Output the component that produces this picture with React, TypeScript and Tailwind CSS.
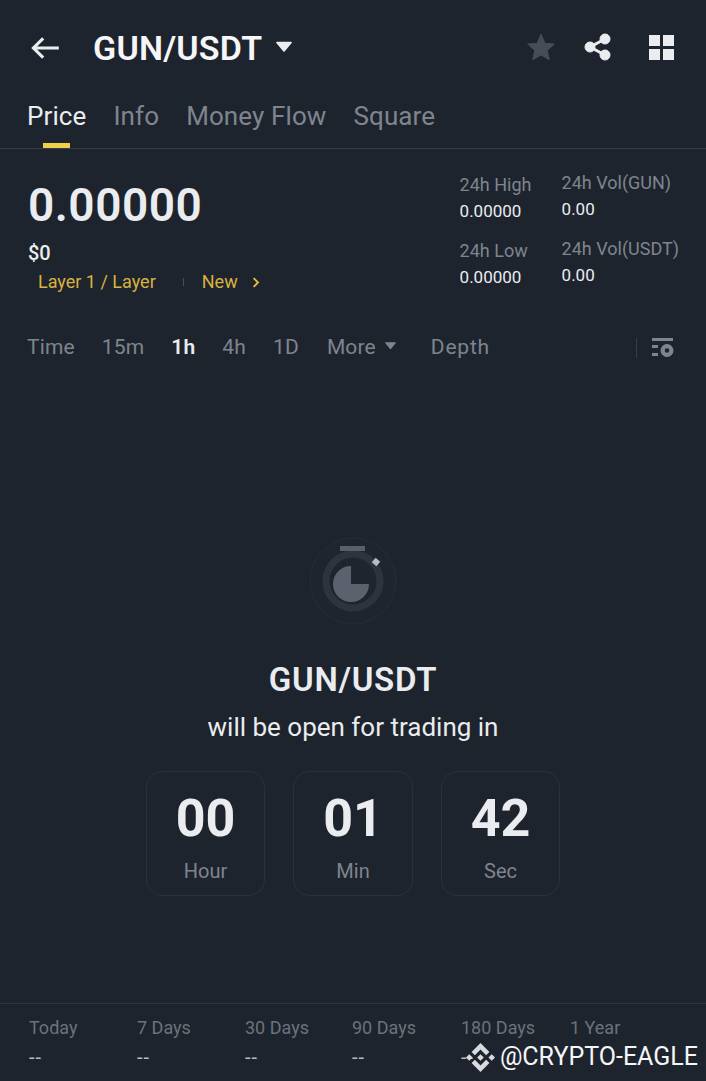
import React from 'react'

const tabs = ['Price', 'Info', 'Money Flow', 'Square']
const intervals = ['Time', '15m', '1h', '4h', '1D']
const countdown = [
  { value: '00', label: 'Hour' },
  { value: '01', label: 'Min' },
  { value: '42', label: 'Sec' },
]
const periods = ['Today', '7 Days', '30 Days', '90 Days', '180 Days', '1 Year']

function Stat({ label, value }: { label: string; value: string }) {
  return (
    <div className="flex flex-col">
      <span className="text-[18px] leading-[24px] text-[#7e858f]">{label}</span>
      <span className="mt-[2px] text-[17px] leading-[24px] text-[#eaecef]">{value}</span>
    </div>
  )
}

function Caret({ className }: { className: string }) {
  return (
    <svg viewBox="0 0 16 12" className={className} fill="currentColor">
      <path d="M1.5 1.5h13a.8.8 0 0 1 .6 1.3L8.6 10.6a.8.8 0 0 1-1.2 0L.9 2.8a.8.8 0 0 1 .6-1.3z" />
    </svg>
  )
}

function BinanceMark() {
  return (
    <svg viewBox="0 0 126.61 126.61" className="h-[29px] w-[29px] text-[#d9dbde]" fill="currentColor">
      <path d="M38.73 53.2l24.59-24.58 24.6 24.6 14.3-14.31L63.32 0 24.43 38.9z" />
      <path d="M0 63.31l14.3-14.31 14.31 14.31-14.31 14.3z" />
      <path d="M38.73 73.41l24.59 24.59 24.6-24.6 14.31 14.29-38.9 38.92-38.91-38.88z" />
      <path d="M98 63.31l14.3-14.31 14.31 14.31-14.31 14.3z" />
      <path d="M77.83 63.3L63.32 48.78 48.81 63.28l14.51 14.5z" />
    </svg>
  )
}

export default function App() {
  return (
    <div
      className="relative flex h-[1081px] w-[706px] flex-col overflow-hidden bg-[#1e242e] text-[#eaecef]"
      style={{ fontFamily: 'Roboto, "Noto Sans", sans-serif' }}
    >
      {/* 頂部標題列 */}
      <div className="flex h-[96px] items-center pl-[30px] pr-[32px]">
        <svg viewBox="0 0 32 26" className="h-[24px] w-[30px]" fill="none" stroke="#eaecef" strokeWidth="3.4">
          <path d="M31 13H4M14 2.5L3.5 13 14 23.5" />
        </svg>
        <span className="ml-[33px] text-[34px] font-semibold leading-none tracking-[0.2px] text-[#f5f6f7]">GUN/USDT</span>
        <Caret className="ml-[13px] h-[13px] w-[18px] -translate-y-[2px] text-[#eaecef]" />
        <div className="ml-auto flex -translate-y-px items-center">
          <svg
            viewBox="0 0 24 24"
            className="h-[30px] w-[30px] text-[#474d57]"
            fill="currentColor"
            stroke="currentColor"
            strokeWidth="1"
            strokeLinejoin="round"
          >
            <path d="M12 2l3 7 7.4.7-5.6 4.9 1.7 7.4-6.5-3.9-6.5 3.9 1.7-7.4-5.6-4.9L9 9z" />
          </svg>
          <svg viewBox="0 0 28 28" className="ml-[28px] h-[28px] w-[28px]" fill="#eaecef" stroke="#eaecef">
            <circle cx="21" cy="6" r="5" />
            <circle cx="6" cy="14" r="5" />
            <circle cx="21" cy="22" r="5" />
            <path d="M21 6L6 14l15 8" fill="none" strokeWidth="3" />
          </svg>
          <div className="ml-[37px] grid grid-cols-2 gap-[3px]">
            <div className="h-[11px] w-[11px] bg-[#eaecef]" />
            <div className="h-[11px] w-[11px] bg-[#eaecef]" />
            <div className="h-[11px] w-[11px] bg-[#eaecef]" />
            <div className="h-[11px] w-[11px] bg-[#eaecef]" />
          </div>
        </div>
      </div>

      {/* 分頁 */}
      <div className="flex h-[53px] gap-[27px] border-b border-[#383e48] pl-[27px]">
        {tabs.map((tab, i) => (
          <div key={tab} className="relative pt-[4px]">
            <span className={`text-[26px] leading-[32px] tracking-[0.1px] ${i === 0 ? 'text-[#eaecef]' : 'text-[#7e858f]'}`}>
              {tab}
            </span>
            {i === 0 && <div className="absolute bottom-0 left-[16px] h-[5px] w-[27px] bg-[#f0cf4a]" />}
          </div>
        ))}
      </div>

      {/* 價格與 24h 資料 */}
      <div className="flex h-[171px] pl-[28px]">
        <div className="flex flex-col pt-[26px]">
          <span className="text-[46px] font-semibold leading-[60px] tracking-[0.5px] text-[#eaecef]">0.00000</span>
          <span className="mt-[5px] text-[20px] font-medium leading-[26px]">$0</span>
          <div className="mt-[4px] flex items-center pl-[10px] text-[18px] leading-[24px] text-[#d8b23f]">
            <span>Layer 1 / Layer</span>
            <div className="ml-[27px] h-[8px] w-px bg-[#474d57]" />
            <span className="ml-[18px]">New</span>
            <svg viewBox="0 0 10 14" className="ml-[14px] h-[11px] w-[8px]" fill="none" stroke="#e8bd3f" strokeWidth="2.4">
              <path d="M2 1.5L7.5 7 2 12.5" />
            </svg>
          </div>
        </div>
        <div className="ml-auto flex pr-[27px] pt-[23px]">
          <div className="flex w-[102px] flex-col gap-[16px] pt-px">
            <Stat label="24h High" value="0.00000" />
            <Stat label="24h Low" value="0.00000" />
          </div>
          <div className="-mt-px flex flex-col gap-[16px]">
            <Stat label="24h Vol(GUN)" value="0.00" />
            <Stat label="24h Vol(USDT)" value="0.00" />
          </div>
        </div>
      </div>

      {/* K 線週期列 */}
      <div className="flex h-[54px] items-center pl-[27px] pr-[31px] pt-[2px] text-[21px] tracking-[0.15px] text-[#7e858f]">
        <div className="flex gap-[27px]">
          {intervals.map((item) => (
            <span key={item} className={item === '1h' ? 'font-semibold text-[#eaecef]' : ''}>
              {item}
            </span>
          ))}
        </div>
        <span className="ml-[28px]">More</span>
        <Caret className="ml-[8px] h-[9px] w-[13px] -translate-y-[3px] text-[#7e858f]" />
        <span className="ml-[34px] tracking-[0.8px]">Depth</span>
        <div className="ml-auto h-[20px] w-px bg-[#383e48]" />
        <svg viewBox="0 0 24 24" className="ml-[14px] h-[24px] w-[24px] text-[#7e858f]" fill="currentColor">
          <rect x="1" y="2" width="21" height="3" />
          <rect x="1" y="9" width="6" height="3" />
          <rect x="1" y="17" width="6" height="3" />
          <path
            fillRule="evenodd"
            d="M16 8a6.5 6.5 0 1 1 0 13 6.5 6.5 0 0 1 0-13zm0 4.2a2.3 2.3 0 1 0 0 4.6 2.3 2.3 0 0 0 0-4.6z"
          />
        </svg>
      </div>

      {/* 開盤倒數 */}
      <div className="flex flex-1 flex-col items-center pt-[163px]">
        <svg viewBox="0 0 88 88" className="h-[88px] w-[88px]">
          <circle cx="44" cy="44" r="43" fill="#1f252f" stroke="#272d37" strokeWidth="1" />
          <circle cx="44" cy="44" r="27" fill="none" stroke="#2e343e" strokeWidth="7" />
          <rect x="31" y="9" width="25" height="5" fill="#5a606b" />
          <rect x="-3" y="-3" width="6" height="6" transform="translate(67 25) rotate(40)" fill="#b9bcc2" />
          <path d="M42 29v18h18a18 18 0 1 1-18-18z" fill="#5c626d" />
        </svg>
        <span className="mt-[36px] text-[33px] font-semibold leading-[38px] tracking-[0.7px] text-[#eaecef]">GUN/USDT</span>
        <span className="mt-[12px] text-[26px] leading-[32px] text-[#eaecef]">will be open for trading in</span>
        <div className="mt-[28px] grid grid-cols-[119px_120px_119px] gap-[28px]">
          {countdown.map((c) => (
            <div
              key={c.label}
              className="flex h-[125px] flex-col items-center rounded-[16px] border border-[#2b313b] pt-[17px]"
            >
              <span className="text-[52px] font-bold leading-[60px] text-[#eaecef]">{c.value}</span>
              <span className="mt-[9px] text-[20px] leading-[26px] text-[#7e858f]">{c.label}</span>
            </div>
          ))}
        </div>
      </div>

      {/* 區間漲跌 */}
      <div className="grid h-[78px] grid-cols-[108px_108px_107px_109px_109px_1fr] border-t border-[#2e343e] pl-[29px] pt-[12px]">
        {periods.map((p, i) => (
          <div key={p} className="flex flex-col">
            <span className="text-[18px] leading-[24px] text-[#6c727c]">{p}</span>
            {i < 5 && <span className="mt-[5px] text-[20px] leading-[24px] tracking-[1px] text-[#b7bdc6]">--</span>}
          </div>
        ))}
      </div>

      {/* 浮水印 */}
      <div className="absolute bottom-[9px] right-[8px] flex items-center gap-[5px]">
        <BinanceMark />
        <span className="text-[25px] leading-[30px] text-[#f5f6f7]">@CRYPTO-EAGLE</span>
      </div>
    </div>
  )
}
